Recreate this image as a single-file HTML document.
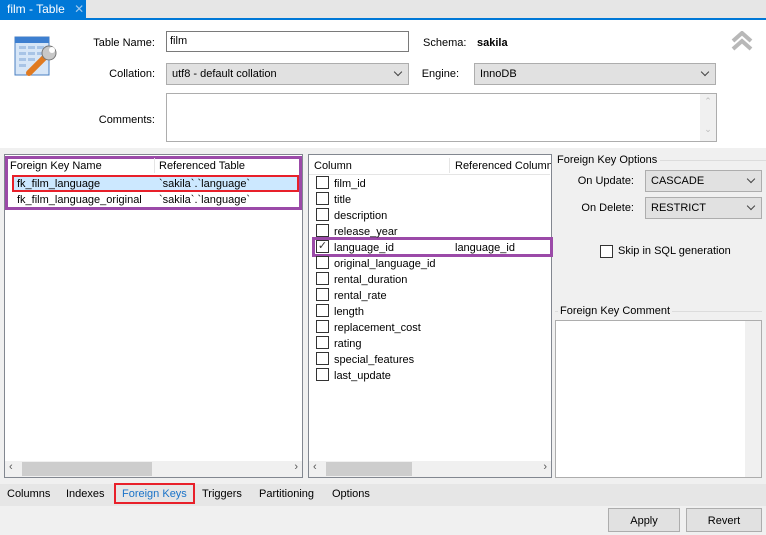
<!DOCTYPE html>
<html><head><style>
*{box-sizing:border-box;margin:0;padding:0}
body{width:766px;height:535px;background:#fff;font-family:"Liberation Sans",sans-serif;font-size:11px;color:#000;position:relative;overflow:hidden}
.a{position:absolute}
.sel{position:absolute;background:#e1e1e1;border:1px solid #adadad;padding:4px 5px 0;height:22px}
.sel:after{content:"";position:absolute;right:7px;top:5px;width:5px;height:5px;border-right:1px solid #444;border-bottom:1px solid #444;transform:rotate(45deg)}
.inp{position:absolute;background:#fff;border:1px solid #7a7a7a}
.lbl{position:absolute;text-align:right}
.cb{position:absolute;width:13px;height:13px;border:1px solid #333;background:#fff}
.row{position:absolute;height:16px;line-height:18px;white-space:nowrap}
.hsb{position:absolute;height:16px;background:#f0f0f0}
</style></head><body>
<div class="a" style="left:0;top:0;width:766px;height:19px;background:#e6e6e6"></div>
<div class="a" style="left:0;top:0;width:86px;height:19px;background:#0078d7;color:#fff;font-size:12px;padding:2px 0 0 7px">film - Table <span style="color:#9cc8ee;margin-left:6px">✕</span></div>
<div class="a" style="left:0;top:18px;width:766px;height:2px;background:#0078d7"></div>

<svg class="a" style="left:14px;top:36px" width="46" height="44" viewBox="0 0 46 44">
<rect x="1" y="1" width="34" height="38" fill="#d7e6f7" stroke="#4a7fc1"/>
<rect x="1" y="1" width="34" height="6" fill="#3d7fd0"/>
<g fill="#a8c4e6"><rect x="5" y="10" width="7" height="3"/><rect x="14" y="10" width="7" height="3"/><rect x="23" y="10" width="7" height="3"/><rect x="5" y="16" width="7" height="3"/><rect x="14" y="16" width="7" height="3"/><rect x="23" y="16" width="7" height="3"/><rect x="5" y="22" width="7" height="3"/><rect x="14" y="22" width="7" height="3"/><rect x="5" y="28" width="7" height="3"/></g>
<path d="M15 37 L31 21" stroke="#e07a20" stroke-width="6" stroke-linecap="round"/>
<circle cx="35" cy="17" r="7" fill="#c8c8c8" stroke="#777"/><circle cx="38" cy="14" r="3" fill="#fff"/>
</svg>

<div class="lbl" style="left:60px;width:95px;top:37px">Table Name:</div>
<div class="inp" style="left:166px;top:31px;width:243px;height:21px;padding:3px 3px">film</div>
<div class="a" style="left:423px;top:37px">Schema:</div>
<div class="a" style="left:477px;top:37px;font-weight:bold">sakila</div>
<svg class="a" style="left:731px;top:31px" width="22" height="20"><path d="M2 10 L11 2 L20 10 M2 18 L11 10 L20 18" fill="none" stroke="#b8b8b8" stroke-width="4"/></svg>

<div class="lbl" style="left:60px;width:95px;top:68px">Collation:</div>
<div class="sel" style="left:166px;top:63px;width:243px">utf8 - default collation</div>
<div class="lbl" style="left:410px;width:49px;top:68px">Engine:</div>
<div class="sel" style="left:474px;top:63px;width:242px">InnoDB</div>
<div class="lbl" style="left:60px;width:95px;top:114px">Comments:</div>
<div class="inp" style="left:166px;top:93px;width:551px;height:49px;border-color:#adadad"><div class="a" style="right:0;top:0;width:16px;height:47px;background:#f0f0f0;color:#bbb;font-size:9px;text-align:center;line-height:14px">⌃<br><br>⌄</div></div>

<div class="a" style="left:0;top:148px;width:766px;height:336px;background:#f0f0f0"></div>
<!-- left panel -->
<div class="a" style="left:4px;top:154px;width:299px;height:324px;background:#fff;border:1px solid #828790"></div>
<div class="a" style="left:5px;top:156px;width:297px;height:54px;border:3px solid #9b4aa8"></div>
<div class="row" style="left:10px;top:157px">Foreign Key Name</div>
<div class="a" style="left:154px;top:158px;width:1px;height:15px;background:#e5e5e5"></div>
<div class="row" style="left:159px;top:157px">Referenced Table</div>
<div class="a" style="left:12px;top:175px;width:287px;height:17px;background:#cce8ff;border:2px solid #e8202a"></div>
<div class="row" style="left:17px;top:175px">fk_film_language</div>
<div class="row" style="left:159px;top:175px">`sakila`.`language`</div>
<div class="row" style="left:17px;top:191px">fk_film_language_original</div>
<div class="row" style="left:159px;top:191px">`sakila`.`language`</div>
<div class="hsb" style="left:5px;top:461px;width:297px"><div class="a" style="left:17px;top:1px;width:130px;height:14px;background:#cdcdcd"></div><span class="a" style="left:4px;top:0;color:#555">‹</span><span class="a" style="right:4px;top:0;color:#555">›</span></div>

<!-- middle -->
<div class="a" style="left:308px;top:154px;width:244px;height:324px;background:#fff;border:1px solid #828790;overflow:hidden">
<div class="row" style="left:5px;top:2px">Column</div>
<div class="a" style="left:140px;top:3px;width:1px;height:15px;background:#e5e5e5"></div>
<div class="row" style="left:146px;top:2px">Referenced Column</div>
<div class="a" style="left:0;top:19px;width:241px;height:1px;background:#e5e5e5"></div>
</div>
<div class="a" style="left:312px;top:237px;width:241px;height:20px;border:3px solid #9b4aa8"></div>
<div class="row" style="left:455px;top:239px">language_id</div>
<div class="hsb" style="left:309px;top:461px;width:242px"><div class="a" style="left:17px;top:1px;width:86px;height:14px;background:#cdcdcd"></div><span class="a" style="left:4px;top:0;color:#555">‹</span><span class="a" style="right:4px;top:0;color:#555">›</span></div>

<!-- right -->
<div class="a" style="left:557px;top:154px">Foreign Key Options</div>
<div class="a" style="left:660px;top:160px;width:106px;height:1px;background:#dcdcdc"></div>
<div class="lbl" style="left:560px;width:74px;top:175px">On Update:</div>
<div class="sel" style="left:645px;top:170px;width:117px;height:22px">CASCADE</div>
<div class="lbl" style="left:560px;width:74px;top:202px">On Delete:</div>
<div class="sel" style="left:645px;top:197px;width:117px;height:22px">RESTRICT</div>
<div class="cb" style="left:600px;top:245px"></div>
<div class="a" style="left:618px;top:245px">Skip in SQL generation</div>
<div class="a" style="left:555px;top:311px;width:207px;height:1px;background:#dcdcdc"></div>
<div class="a" style="left:558px;top:305px;background:#f0f0f0;padding:0 2px">Foreign Key Comment</div>
<div class="a" style="left:555px;top:320px;width:207px;height:158px;background:#fff;border:1px solid #adadad"><div class="a" style="right:0;top:0;width:16px;height:156px;background:#f0f0f0"></div></div>

<!-- tabs -->
<div class="a" style="left:0;top:484px;width:766px;height:22px;background:#e6e6e6"></div>
<div class="a" style="left:7px;top:488px">Columns</div>
<div class="a" style="left:66px;top:488px">Indexes</div>
<div class="a" style="left:114px;top:483px;width:81px;height:21px;border:2px solid #e8202a"></div>
<div class="a" style="left:122px;top:488px;color:#1a73c8">Foreign Keys</div>
<div class="a" style="left:202px;top:488px">Triggers</div>
<div class="a" style="left:259px;top:488px">Partitioning</div>
<div class="a" style="left:332px;top:488px">Options</div>
<div class="a" style="left:0;top:506px;width:766px;height:29px;background:#f0f0f0"></div>
<div class="a" style="left:608px;top:508px;width:72px;height:24px;background:#e1e1e1;border:1px solid #adadad;text-align:center;line-height:24px">Apply</div>
<div class="a" style="left:686px;top:508px;width:76px;height:24px;background:#e1e1e1;border:1px solid #adadad;text-align:center;line-height:24px">Revert</div>

<div class="cb" style="left:316px;top:176px"></div><div class="row" style="left:334px;top:175px">film_id</div>
<div class="cb" style="left:316px;top:192px"></div><div class="row" style="left:334px;top:191px">title</div>
<div class="cb" style="left:316px;top:208px"></div><div class="row" style="left:334px;top:207px">description</div>
<div class="cb" style="left:316px;top:224px"></div><div class="row" style="left:334px;top:223px">release_year</div>
<div class="cb" style="left:316px;top:240px;font-size:11px;line-height:11px;text-align:center;color:#333">✓</div><div class="row" style="left:334px;top:239px">language_id</div>
<div class="cb" style="left:316px;top:256px"></div><div class="row" style="left:334px;top:255px">original_language_id</div>
<div class="cb" style="left:316px;top:272px"></div><div class="row" style="left:334px;top:271px">rental_duration</div>
<div class="cb" style="left:316px;top:288px"></div><div class="row" style="left:334px;top:287px">rental_rate</div>
<div class="cb" style="left:316px;top:304px"></div><div class="row" style="left:334px;top:303px">length</div>
<div class="cb" style="left:316px;top:320px"></div><div class="row" style="left:334px;top:319px">replacement_cost</div>
<div class="cb" style="left:316px;top:336px"></div><div class="row" style="left:334px;top:335px">rating</div>
<div class="cb" style="left:316px;top:352px"></div><div class="row" style="left:334px;top:351px">special_features</div>
<div class="cb" style="left:316px;top:368px"></div><div class="row" style="left:334px;top:367px">last_update</div>
</body></html>
